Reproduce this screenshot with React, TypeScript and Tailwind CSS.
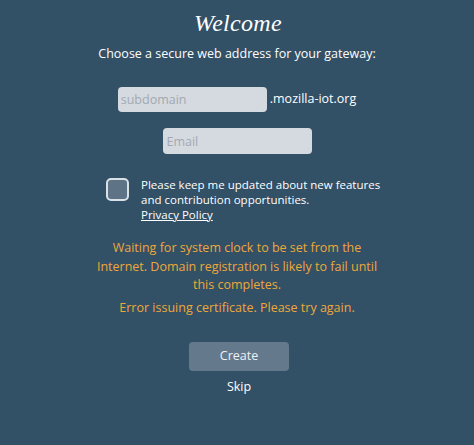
import { useState } from 'react'

export default function App() {
  const [checked, setChecked] = useState(false)
  return (
    <div className="flex h-[445px] w-full flex-col items-center bg-[#325066] font-['Open_Sans',sans-serif] text-white">
      <h1 className="ml-[2px] mt-[8px] font-['Liberation_Serif',serif] text-[24px] italic leading-[30px] tracking-[0.3px]">Welcome</h1>
      <p className="mt-[6px] text-[12.5px] leading-[20px]">Choose a secure web address for your gateway:</p>

      <div className="mt-[23px] flex items-center">
        <input
          type="text"
          placeholder="subdomain"
          className="h-[25px] w-[149px] rounded-[4px] bg-[#d5dae0] px-[3px] text-[12.5px] text-gray-700 outline-none placeholder:text-[#a3a9b1]"
        />
        <span className="ml-[3px] text-[12.5px]">.mozilla-iot.org</span>
      </div>

      <input
        type="email"
        placeholder="Email"
        className="mt-[16px] h-[26px] w-[149px] rounded-[4px] bg-[#d5dae0] px-[4px] text-[12.5px] text-gray-700 outline-none placeholder:text-[#a3a9b1]"
      />

      <div className="ml-[106px] mt-[23px] flex w-[290px] gap-[12px] self-start">
        <button
          type="button"
          onClick={() => setChecked(!checked)}
          className="mt-[1px] h-[23px] w-[23px] shrink-0 rounded-[5px] border-2 border-[#d9e0e6] bg-[#5f7386]"
        />
        <div className="text-[11.5px] leading-[15px]">
          <p>
            Please keep me updated about new features
            <br />
            and contribution opportunities.
          </p>
          <a href="#" className="underline">Privacy Policy</a>
        </div>
      </div>

      <div className="mt-[17px] w-[300px] text-center text-[12.5px] leading-[18.5px] text-[#eea83a]">
        <p>
          Waiting for system clock to be set from the
          <br />
          Internet. Domain registration is likely to fail until
          <br />
          this completes.
        </p>
        <p className="mt-[4px]">Error issuing certificate. Please try again.</p>
      </div>

      <button
        type="button"
        className="ml-[4px] mt-[25px] h-[29px] w-[100px] rounded-[4px] bg-[#64798c] text-[12.5px] text-[#eef1f4]"
      >
        Create
      </button>
      <a href="#" className="ml-[4px] mt-[6px] text-[12.5px] leading-[20px]">Skip</a>
    </div>
  )
}
